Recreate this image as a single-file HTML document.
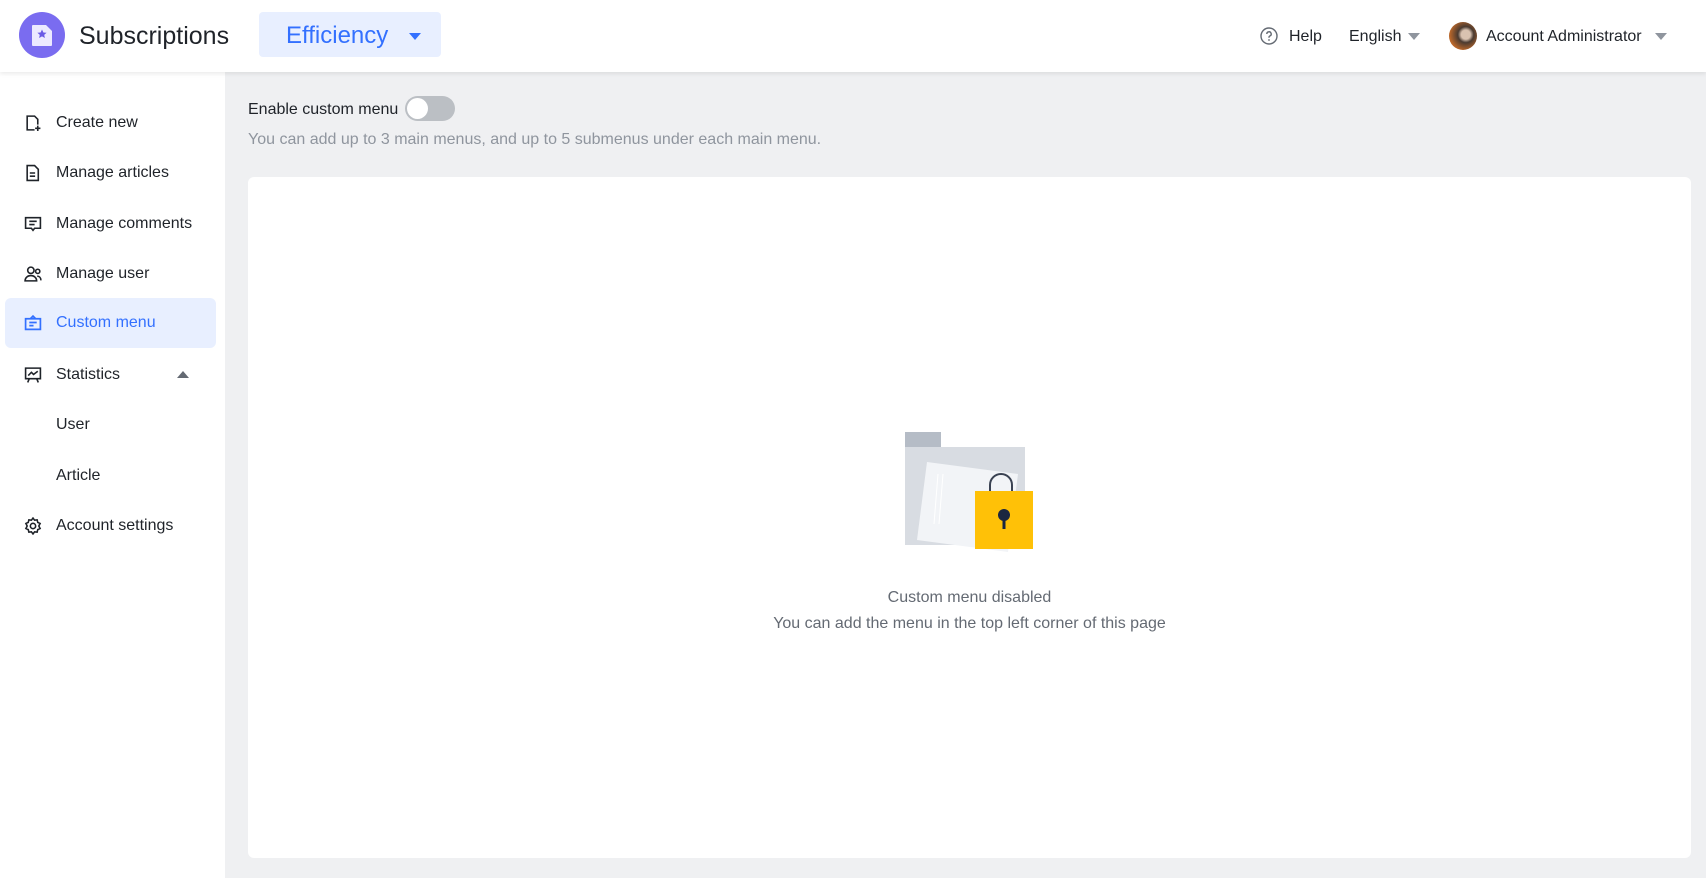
<!DOCTYPE html>
<html><head><meta charset="utf-8"><style>
*{margin:0;padding:0;box-sizing:border-box}
body{width:1706px;height:878px;overflow:hidden;background:#eff0f2;font-family:"Liberation Sans",sans-serif;position:relative;color:#1f2329}
.hdr{position:absolute;left:0;top:0;width:1706px;height:72px;background:#fff;box-shadow:0 2px 4px rgba(0,0,0,.08);z-index:2}
.abs{position:absolute}
.side{position:absolute;left:0;top:72px;width:225px;height:806px;background:#fff}
.item{position:absolute;left:5px;width:211px;height:50px;border-radius:6px;font-size:16px;color:#1f2329;line-height:50px;padding-left:51px}
.item svg{position:absolute;left:19px;top:16px}
.item.act{background:#e8efff;color:#3370ff}
.card{position:absolute;left:248px;top:177px;width:1443px;height:681px;background:#fff;border-radius:6px}
</style></head><body>
<div class="hdr">
 <svg class="abs" style="left:19px;top:12px" width="46" height="46" viewBox="0 0 46 46"><circle cx="23" cy="23" r="23" fill="#7a6cf0"/><path d="M14 13h13l6 6v14a1 1 0 0 1-1 1H14a1 1 0 0 1-1-1V14a1 1 0 0 1 1-1z" fill="#ece9ff"/><path d="M23 17.5l1.4 3 3.2.3-2.4 2.1.7 3.1-2.9-1.6-2.9 1.6.7-3.1-2.4-2.1 3.2-.3z" fill="#6a5ae6"/></svg>
 <div class="abs" style="left:79px;top:22px;font-size:25px;color:#1f2329">Subscriptions</div>
 <div class="abs" style="left:259px;top:12px;width:182px;height:45px;background:#e8efff;border-radius:4px"></div>
 <div class="abs" style="left:286px;top:22px;font-size:24px;color:#3370ff">Efficiency</div>
 <div class="abs" style="left:409px;top:33px;border-left:6px solid transparent;border-right:6px solid transparent;border-top:7px solid #3370ff"></div>
 <svg class="abs" style="left:1260px;top:27px" width="18" height="18" viewBox="0 0 18 18"><circle cx="9" cy="9" r="8" fill="none" stroke="#646a73" stroke-width="1.4"/><path d="M6.8 7a2.2 2.2 0 1 1 3 2c-.6.3-.8.7-.8 1.3v.4" fill="none" stroke="#646a73" stroke-width="1.4"/><circle cx="9" cy="13" r=".9" fill="#646a73"/></svg>
 <div class="abs" style="left:1289px;top:28px;font-size:16px;color:#1f2329">Help</div>
 <div class="abs" style="left:1349px;top:28px;font-size:16px;color:#1f2329">English</div>
 <div class="abs" style="left:1408px;top:33px;border-left:6px solid transparent;border-right:6px solid transparent;border-top:7px solid #8f959e"></div>
 <div class="abs" style="left:1449px;top:22px;width:28px;height:28px;border-radius:50%;background:radial-gradient(circle at 60% 45%,#d9c2b0 0 20%,#4a3a30 35%,#b8662a 70%)"></div>
 <div class="abs" style="left:1486px;top:28px;font-size:16px;color:#1f2329">Account Administrator</div>
 <div class="abs" style="left:1655px;top:33px;border-left:6px solid transparent;border-right:6px solid transparent;border-top:7px solid #8f959e"></div>
</div>
<div class="side">
 <div class="item" style="top:26px"><svg width="18" height="18" viewBox="0 0 17 17" fill="none" stroke="#1f2329" stroke-width="1.5"><path d="M10 15H3V2h7l3 3v5"/><path d="M13 11v5M10.5 13.5h5"/></svg>Create new</div>
 <div class="item" style="top:76.4px"><svg width="18" height="18" viewBox="0 0 17 17" fill="none" stroke="#1f2329" stroke-width="1.5"><path d="M3 1.5h7l3.5 3.5v10.5H3z"/><path d="M5.5 8.5h5M5.5 11.5h5"/></svg>Manage articles</div>
 <div class="item" style="top:126.8px"><svg width="18" height="18" viewBox="0 0 17 17" fill="none" stroke="#1f2329" stroke-width="1.5"><path d="M1.5 2.5h14v10H10l-1.5 2-1.5-2H1.5z"/><path d="M5 6h7M5 9h5"/></svg>Manage comments</div>
 <div class="item" style="top:177.2px"><svg width="19" height="18" viewBox="0 0 18 17" fill="none" stroke="#1f2329" stroke-width="1.5"><circle cx="6.5" cy="5" r="3"/><path d="M1 15c0-3 2.5-5 5.5-5s5.5 2 5.5 5z"/><circle cx="13" cy="6" r="2"/><path d="M12.5 10.5c2 0 3.5 1.5 3.5 4"/></svg>Manage user</div>
 <div class="item act" style="top:226px"><svg width="18" height="18" viewBox="0 0 17 17" fill="none" stroke="#3370ff" stroke-width="1.6"><path d="M1.5 4.5h14v10h-14z"/><path d="M6 4.5 8.5 2 11 4.5M5 8h7M5 11h4"/></svg>Custom menu</div>
 <div class="item" style="top:278px"><svg width="18" height="18" viewBox="0 0 17 17" fill="none" stroke="#1f2329" stroke-width="1.5"><path d="M1.5 2h14v10h-14z"/><path d="M4 9l3-3 2 2 4-3M5 12l-1.5 3.5M12 12l1.5 3.5"/></svg>Statistics</div>
 <div class="abs" style="left:177px;top:299px;border-left:6px solid transparent;border-right:6px solid transparent;border-bottom:7px solid #646a73"></div>
 <div class="item" style="top:328.4px">User</div>
 <div class="item" style="top:378.8px">Article</div>
 <div class="item" style="top:429.2px"><svg width="18" height="18" viewBox="0 0 17 17" fill="none" stroke="#1f2329" stroke-width="1.5"><path d="M8.5 1 10 3l2.4-.3.6 2.4 2.2 1L14 8.5l1.2 2.4-2.2 1-.6 2.4L10 14l-1.5 2L7 14l-2.4.3-.6-2.4-2.2-1L3 8.5 1.8 6.1l2.2-1 .6-2.4L7 3z"/><circle cx="8.5" cy="8.5" r="2.5"/></svg>Account settings</div>
</div>
<div class="abs" style="left:248px;top:101px;font-size:16px;color:#1f2329">Enable custom menu</div>
<div class="abs" style="left:405px;top:96px;width:50px;height:25px;border-radius:12.5px;background:#bbbfc4"></div>
<div class="abs" style="left:407px;top:98px;width:21px;height:21px;border-radius:50%;background:#fff"></div>
<div class="abs" style="left:248px;top:131px;font-size:16px;color:#8f959e">You can add up to 3 main menus, and up to 5 submenus under each main menu.</div>
<div class="card">
 <svg class="abs" style="left:657px;top:255px" width="130" height="125" viewBox="0 0 130 125"><rect x="0" y="0" width="36" height="16" fill="#b5bcc6"/><rect x="0" y="15" width="120" height="98" fill="#d8dce2"/><path d="M22 30l91 12-10 78-91-12z" fill="#f2f4f7"/><path d="M33 42l-4 50M38 42l-4 50" stroke="#fff" stroke-width="1"/><path d="M85 59v-6a11 11 0 0 1 22 0v6" fill="none" stroke="#3a4252" stroke-width="2"/><rect x="70" y="59" width="58" height="58" fill="#ffc107"/><circle cx="99" cy="83" r="6" fill="#1a2640"/><rect x="97.5" y="85" width="3" height="12" fill="#1a2640"/></svg>
 <div class="abs" style="left:0;width:1443px;top:412px;text-align:center;font-size:16px;color:#646a73">Custom menu disabled</div>
 <div class="abs" style="left:0;width:1443px;top:438px;text-align:center;font-size:16px;color:#646a73">You can add the menu in the top left corner of this page</div>
</div>
</body></html>
